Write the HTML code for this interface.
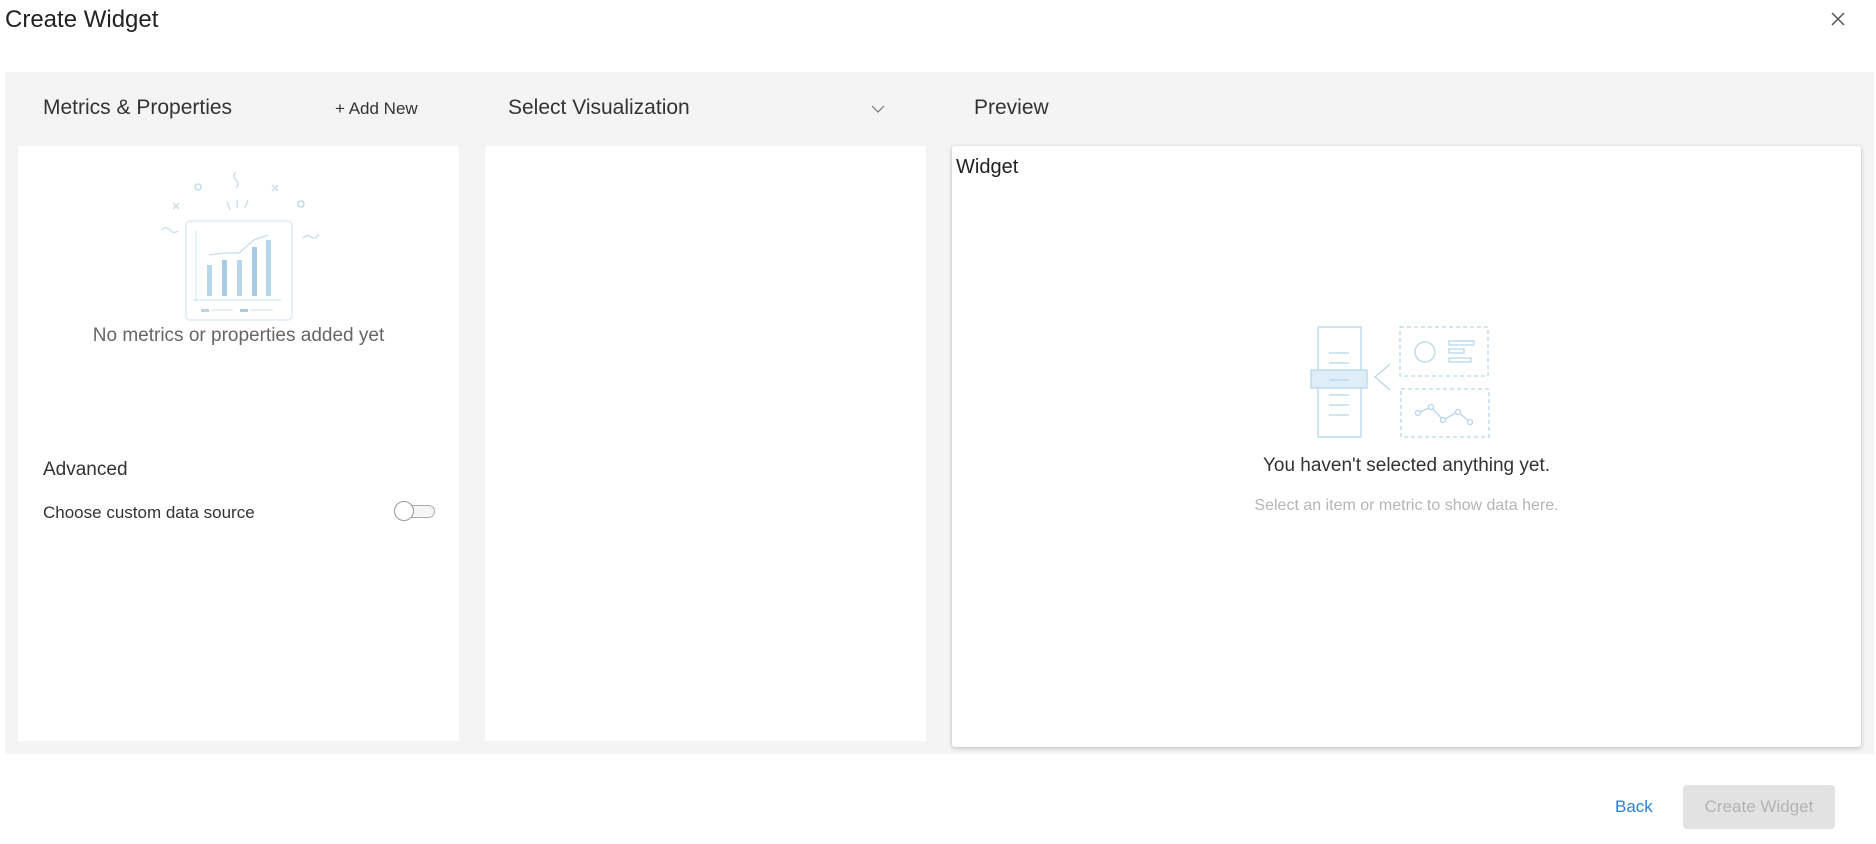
<!DOCTYPE html>
<html><head><meta charset="utf-8"><style>
*{margin:0;padding:0;box-sizing:border-box}
body{width:1876px;height:844px;background:#fff;font-family:"Liberation Sans",sans-serif;position:relative;overflow:hidden;color:#333}
.a{position:absolute;white-space:nowrap}
.card{position:absolute;background:#fff}
</style></head><body>
<div class="a" style="left:5px;top:6px;font-size:24px;color:#222">Create Widget</div>
<svg class="a" style="left:1831px;top:12px" width="14" height="14"><path d="M1 1 L13 13 M13 1 L1 13" stroke="#555" stroke-width="1.5"/></svg>
<div class="a" style="left:5px;top:72px;width:1869px;height:682px;background:#f4f4f4"></div>
<div class="a" style="left:43px;top:96px;font-size:21px;color:#333">Metrics &amp; Properties</div>
<div class="a" style="left:335px;top:99px;font-size:17px;color:#333">+ Add New</div>
<div class="a" style="left:508px;top:96px;font-size:21px;color:#333">Select Visualization</div>
<svg class="a" style="left:871px;top:104px" width="14" height="10"><path d="M1 2 L7 8 L13 2" fill="none" stroke="#777" stroke-width="1.2"/></svg>
<div class="a" style="left:974px;top:96px;font-size:21px;color:#333">Preview</div>
<div class="card" style="left:18px;top:146px;width:441px;height:595px"></div>
<div class="card" style="left:485px;top:146px;width:441px;height:595px"></div>
<div class="card" style="left:952px;top:146px;width:909px;height:601px;border-radius:3px;box-shadow:0 1px 4px rgba(0,0,0,0.25)"></div>
<div class="a" style="left:956px;top:156px;font-size:20px;color:#222">Widget</div>
<svg class="a" style="left:0;top:0" width="1876" height="844" fill="none" stroke="#b8d6ea" stroke-width="1.3">
<rect x="186" y="221" width="106" height="99" rx="4" stroke="#d6e8f3"/>
<path d="M196 231 V302 M193 300 H281" stroke="#dbe8f0"/>
<g fill="#b7d6ea" stroke="none"><rect x="207" y="265" width="5" height="31"/><rect x="222" y="260" width="5" height="36" fill="#a6cbe2"/><rect x="237" y="260" width="5" height="36"/><rect x="252" y="247" width="5" height="49" fill="#a6cbe2"/><rect x="266" y="240" width="5" height="56"/><rect x="201" y="309" width="8" height="3"/><rect x="240" y="309" width="8" height="3" fill="#a6cbe2"/></g>
<path d="M209 255 L224 253 L239 253 L254 240 L268 235" stroke="#c5dded"/>
<path d="M211 310 H233 M250 310 H273" stroke="#d6e8f3"/>
<circle cx="198" cy="187" r="3"/><circle cx="301" cy="204" r="3"/>
<path d="M173 203 l6 6 m0 -6 l-6 6 M272 185 l6 6 m0 -6 l-6 6 M236 172 q-4 4 0 8 q4 4 0 8 M227 202 l3 8 M237 200 v8 M248 200 l-3 8 M161 230 q5 -5 10 1 q3 3 7 0 M303 238 q4 -4 8 -1 q4 3 8 -3" stroke="#c5dded"/>
<rect x="1318" y="327" width="43" height="110"/>
<rect x="1311" y="370" width="56" height="18" fill="#deedf8"/>
<path d="M1329 353 H1349 M1329 363 H1349 M1329 380 H1349 M1329 395 H1349 M1329 405 H1349 M1329 415 H1349"/>
<path d="M1390 364 L1375 377 L1390 390"/>
<rect x="1400" y="327" width="88" height="49" stroke-dasharray="4 3"/>
<rect x="1401" y="389" width="88" height="48" stroke-dasharray="4 3"/>
<circle cx="1425" cy="352" r="10"/>
<rect x="1449" y="341" width="25" height="4"/><rect x="1449" y="349" width="15" height="4"/><rect x="1449" y="358" width="22" height="4"/>
<path d="M1418 413 L1431 407 L1443 420 L1458 412 L1470 422"/>
<g fill="#fff"><circle cx="1418" cy="413" r="2.5"/><circle cx="1431" cy="407" r="2.5"/><circle cx="1443" cy="420" r="2.5"/><circle cx="1458" cy="412" r="2.5"/><circle cx="1470" cy="422" r="2.5"/></g>
</svg>
<div class="a" style="left:18px;width:441px;text-align:center;top:325px;font-size:19px;color:#666">No metrics or properties added yet</div>
<div class="a" style="left:43px;top:459px;font-size:19px;color:#333">Advanced</div>
<div class="a" style="left:43px;top:503px;font-size:17px;color:#333">Choose custom data source</div>
<div class="a" style="left:395px;top:505px;width:40px;height:13px;border:1px solid #aaa;border-radius:7px;background:#f6f6f6"></div>
<div class="a" style="left:394px;top:501px;width:20px;height:20px;border:1px solid #999;border-radius:50%;background:#fff"></div>
<div class="a" style="left:952px;width:909px;text-align:center;top:455px;font-size:19px;color:#333">You haven't selected anything yet.</div>
<div class="a" style="left:952px;width:909px;text-align:center;top:497px;font-size:16px;color:#b5b5b5">Select an item or metric to show data here.</div>
<div class="a" style="left:1615px;top:797px;font-size:17px;color:#2d7fd3">Back</div>
<div class="a" style="left:1683px;top:785px;width:152px;height:44px;background:#e2e2e2;border-radius:4px;color:#b3b3b3;font-size:17px;text-align:center;line-height:44px">Create Widget</div>
</body></html>
